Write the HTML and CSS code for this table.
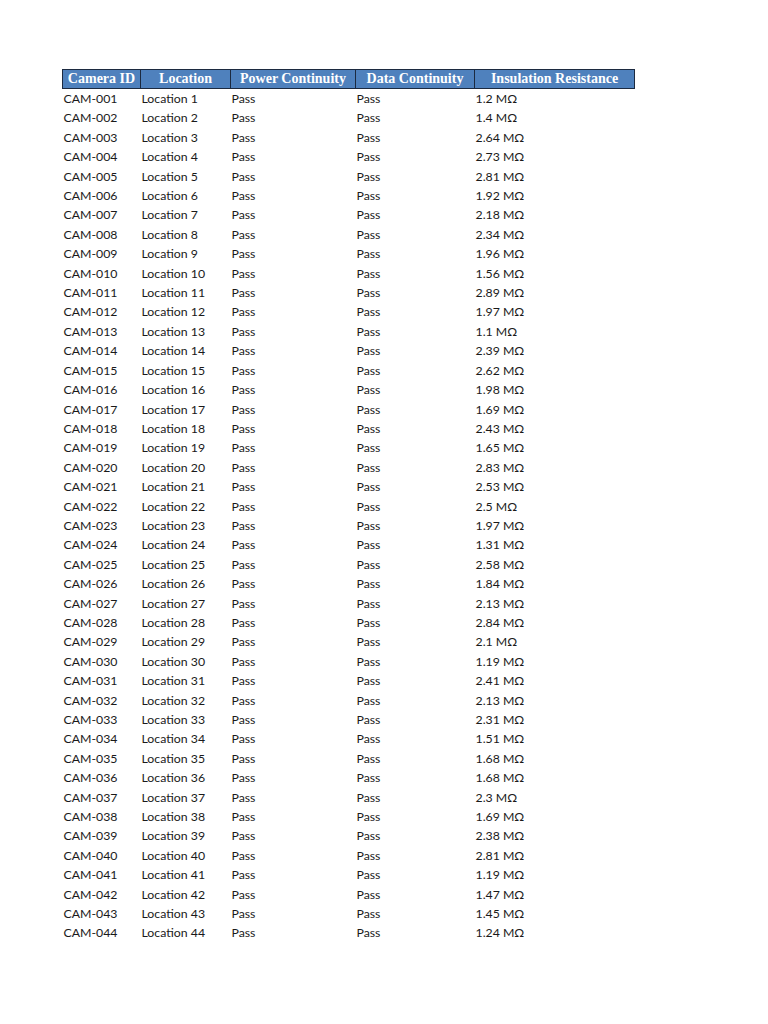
FILE: index.html
```html
<!DOCTYPE html>
<html>
<head>
<meta charset="utf-8">
<link rel="stylesheet" href="styles.css">
</head>
<body>
<div class="page">
<table class="sheet">
<colgroup><col class="c1"><col class="c2"><col class="c3"><col class="c4"><col class="c5"></colgroup>
<thead><tr><th>Camera ID</th><th>Location</th><th>Power Continuity</th><th>Data Continuity</th><th>Insulation Resistance</th></tr></thead>
<tbody id="rows">
<tr><td>CAM-001</td><td>Location 1</td><td>Pass</td><td>Pass</td><td>1.2 MΩ</td></tr>
<tr><td>CAM-002</td><td>Location 2</td><td>Pass</td><td>Pass</td><td>1.4 MΩ</td></tr>
<tr><td>CAM-003</td><td>Location 3</td><td>Pass</td><td>Pass</td><td>2.64 MΩ</td></tr>
<tr><td>CAM-004</td><td>Location 4</td><td>Pass</td><td>Pass</td><td>2.73 MΩ</td></tr>
<tr><td>CAM-005</td><td>Location 5</td><td>Pass</td><td>Pass</td><td>2.81 MΩ</td></tr>
<tr><td>CAM-006</td><td>Location 6</td><td>Pass</td><td>Pass</td><td>1.92 MΩ</td></tr>
<tr><td>CAM-007</td><td>Location 7</td><td>Pass</td><td>Pass</td><td>2.18 MΩ</td></tr>
<tr><td>CAM-008</td><td>Location 8</td><td>Pass</td><td>Pass</td><td>2.34 MΩ</td></tr>
<tr><td>CAM-009</td><td>Location 9</td><td>Pass</td><td>Pass</td><td>1.96 MΩ</td></tr>
<tr><td>CAM-010</td><td>Location 10</td><td>Pass</td><td>Pass</td><td>1.56 MΩ</td></tr>
<tr><td>CAM-011</td><td>Location 11</td><td>Pass</td><td>Pass</td><td>2.89 MΩ</td></tr>
<tr><td>CAM-012</td><td>Location 12</td><td>Pass</td><td>Pass</td><td>1.97 MΩ</td></tr>
<tr><td>CAM-013</td><td>Location 13</td><td>Pass</td><td>Pass</td><td>1.1 MΩ</td></tr>
<tr><td>CAM-014</td><td>Location 14</td><td>Pass</td><td>Pass</td><td>2.39 MΩ</td></tr>
<tr><td>CAM-015</td><td>Location 15</td><td>Pass</td><td>Pass</td><td>2.62 MΩ</td></tr>
<tr><td>CAM-016</td><td>Location 16</td><td>Pass</td><td>Pass</td><td>1.98 MΩ</td></tr>
<tr><td>CAM-017</td><td>Location 17</td><td>Pass</td><td>Pass</td><td>1.69 MΩ</td></tr>
<tr><td>CAM-018</td><td>Location 18</td><td>Pass</td><td>Pass</td><td>2.43 MΩ</td></tr>
<tr><td>CAM-019</td><td>Location 19</td><td>Pass</td><td>Pass</td><td>1.65 MΩ</td></tr>
<tr><td>CAM-020</td><td>Location 20</td><td>Pass</td><td>Pass</td><td>2.83 MΩ</td></tr>
<tr><td>CAM-021</td><td>Location 21</td><td>Pass</td><td>Pass</td><td>2.53 MΩ</td></tr>
<tr><td>CAM-022</td><td>Location 22</td><td>Pass</td><td>Pass</td><td>2.5 MΩ</td></tr>
<tr><td>CAM-023</td><td>Location 23</td><td>Pass</td><td>Pass</td><td>1.97 MΩ</td></tr>
<tr><td>CAM-024</td><td>Location 24</td><td>Pass</td><td>Pass</td><td>1.31 MΩ</td></tr>
<tr><td>CAM-025</td><td>Location 25</td><td>Pass</td><td>Pass</td><td>2.58 MΩ</td></tr>
<tr><td>CAM-026</td><td>Location 26</td><td>Pass</td><td>Pass</td><td>1.84 MΩ</td></tr>
<tr><td>CAM-027</td><td>Location 27</td><td>Pass</td><td>Pass</td><td>2.13 MΩ</td></tr>
<tr><td>CAM-028</td><td>Location 28</td><td>Pass</td><td>Pass</td><td>2.84 MΩ</td></tr>
<tr><td>CAM-029</td><td>Location 29</td><td>Pass</td><td>Pass</td><td>2.1 MΩ</td></tr>
<tr><td>CAM-030</td><td>Location 30</td><td>Pass</td><td>Pass</td><td>1.19 MΩ</td></tr>
<tr><td>CAM-031</td><td>Location 31</td><td>Pass</td><td>Pass</td><td>2.41 MΩ</td></tr>
<tr><td>CAM-032</td><td>Location 32</td><td>Pass</td><td>Pass</td><td>2.13 MΩ</td></tr>
<tr><td>CAM-033</td><td>Location 33</td><td>Pass</td><td>Pass</td><td>2.31 MΩ</td></tr>
<tr><td>CAM-034</td><td>Location 34</td><td>Pass</td><td>Pass</td><td>1.51 MΩ</td></tr>
<tr><td>CAM-035</td><td>Location 35</td><td>Pass</td><td>Pass</td><td>1.68 MΩ</td></tr>
<tr><td>CAM-036</td><td>Location 36</td><td>Pass</td><td>Pass</td><td>1.68 MΩ</td></tr>
<tr><td>CAM-037</td><td>Location 37</td><td>Pass</td><td>Pass</td><td>2.3 MΩ</td></tr>
<tr><td>CAM-038</td><td>Location 38</td><td>Pass</td><td>Pass</td><td>1.69 MΩ</td></tr>
<tr><td>CAM-039</td><td>Location 39</td><td>Pass</td><td>Pass</td><td>2.38 MΩ</td></tr>
<tr><td>CAM-040</td><td>Location 40</td><td>Pass</td><td>Pass</td><td>2.81 MΩ</td></tr>
<tr><td>CAM-041</td><td>Location 41</td><td>Pass</td><td>Pass</td><td>1.19 MΩ</td></tr>
<tr><td>CAM-042</td><td>Location 42</td><td>Pass</td><td>Pass</td><td>1.47 MΩ</td></tr>
<tr><td>CAM-043</td><td>Location 43</td><td>Pass</td><td>Pass</td><td>1.45 MΩ</td></tr>
<tr><td>CAM-044</td><td>Location 44</td><td>Pass</td><td>Pass</td><td>1.24 MΩ</td></tr>
</tbody>
</table>
</div>
</body>
</html>
```
FILE: styles.css
```css
html, body {
  margin: 0;
  padding: 0;
  background: #ffffff;
}
.page {
  padding: 69px 0 0 62px;
}
.sheet {
  border-collapse: collapse;
  table-layout: fixed;
  width: 572px;
  font-family: Lato, "Open Sans", sans-serif;
  font-size: 12.3px;
  color: #1a1a1a;
}
.c1 { width: 78px; }
.c2 { width: 90px; }
.c3 { width: 125px; }
.c4 { width: 119px; }
.c5 { width: 160px; }
.sheet th {
  height: 18px;
  padding: 0;
  background: #4f81bd;
  color: #ffffff;
  border: 1px solid #1c2a40;
  font-family: "Liberation Serif", "DejaVu Serif", serif;
  font-weight: bold;
  font-size: 14px;
  text-align: center;
  white-space: nowrap;
  line-height: 18px;
}
.sheet td {
  height: 19.4px;
  padding: 0 0 0 1px;
  line-height: 19.4px;
  white-space: nowrap;
  overflow: hidden;
}
```
